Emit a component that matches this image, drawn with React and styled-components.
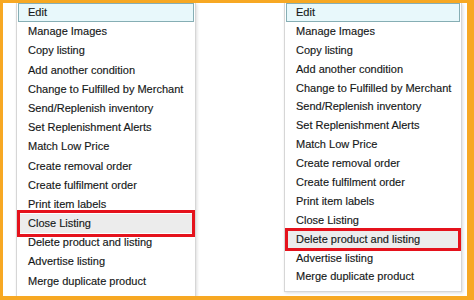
import React from 'react'
import styled, { createGlobalStyle } from 'styled-components'

const GlobalStyle = createGlobalStyle`
  html, body {
    margin: 0;
    padding: 0;
    background: #ffffff;
  }
`

const Frame = styled.div`
  box-sizing: border-box;
  width: 474px;
  height: 300px;
  border-style: solid;
  border-color: #f7a823;
  border-width: 3px 7px 4px 3px;
  background: #ffffff;
  display: flex;
  align-items: flex-start;
  gap: 88px;
  padding-left: 13px;
  overflow: hidden;
  font-family: "Liberation Sans", Arial, sans-serif;
`

const Menu = styled.ul`
  list-style: none;
  margin: 0;
  padding: 0 0 5px 0;
  width: ${p => p.$width}px;
  box-sizing: border-box;
  background: #ffffff;
  border: 1px solid #d6d6d6;
  border-top: none;
  box-shadow: 1px 1px 3px rgba(0, 0, 0, 0.14);
  flex-shrink: 0;
`

const Item = styled.li`
  position: relative;
  box-sizing: border-box;
  height: ${p => p.$rowH}px;
  line-height: ${p => p.$rowH - 2}px;
  padding-left: 9px;
  margin: 0 1px;
  font-size: 11px;
  color: #161818;
  -webkit-text-stroke: 0.15px #161818;
  white-space: nowrap;
  border: 1px solid transparent;

  ${p => p.$active && `
    background: #e8f8fb;
    border-color: #86aeb4;
  `}

  ${p => p.$marked && `
    background: #ececec;
    &::after {
      content: "";
      position: absolute;
      top: -${p.$extend}px;
      bottom: -${p.$extend}px;
      left: -2px;
      right: -2px;
      border: 3px solid #e5121c;
      pointer-events: none;
    }
  `}
`

const items = [
  'Edit',
  'Manage Images',
  'Copy listing',
  'Add another condition',
  'Change to Fulfilled by Merchant',
  'Send/Replenish inventory',
  'Set Replenishment Alerts',
  'Match Low Price',
  'Create removal order',
  'Create fulfilment order',
  'Print item labels',
  'Close Listing',
  'Delete product and listing',
  'Advertise listing',
  'Merge duplicate product',
]

const ActionMenu = ({ width, rowH, marked, extend }) => (
  <Menu $width={width}>
    {items.map(label => (
      <Item
        key={label}
        $rowH={rowH}
        $active={label === 'Edit'}
        $marked={label === marked}
        $extend={extend}
      >
        {label}
      </Item>
    ))}
  </Menu>
)

export default function App() {
  return (
    <>
      <GlobalStyle />
      <Frame>
        <ActionMenu width={180} rowH={19.2} marked="Close Listing" extend={5} />
        <ActionMenu width={178} rowH={18.9} marked="Delete product and listing" extend={3} />
      </Frame>
    </>
  )
}
